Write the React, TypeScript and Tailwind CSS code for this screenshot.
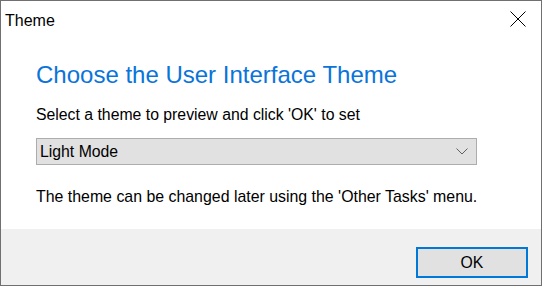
const ThemeDialog = () => {
  return (
    <div className="w-[544px] h-[287px] bg-white overflow-hidden" style={{ fontFamily: '"Liberation Sans", Arial, sans-serif' }}>
      <div className="w-[542px] h-[286px] border border-[#707070] flex flex-col bg-white">
        {/* Title bar */}
        <div className="h-[32px] flex items-start justify-between pl-[4px] pr-[15px]">
          <span className="mt-[10px] text-[16px] leading-[20px] text-black">Theme</span>
          <svg className="mt-[10px]" width="16" height="16" viewBox="0 0 16 16">
            <path d="M0.5 0.5 L15.5 15.5 M15.5 0.5 L0.5 15.5" stroke="#000" strokeWidth="1" fill="none" />
          </svg>
        </div>

        {/* Content */}
        <div className="flex-1 flex flex-col items-start pl-[35px]">
          <h1 className="mt-[28px] text-[24px] leading-[28px] text-[#0a74da] font-normal">
            Choose the User Interface Theme
          </h1>
          <p className="mt-[16.5px] text-[15.8px] leading-[18px] text-black">
            Select a theme to preview and click 'OK' to set
          </p>
          <div className="mt-[14.5px] w-[441px] h-[27px] border border-[#adadad] bg-[#e1e1e1] flex items-center justify-between pl-[3px] pr-[8px]">
            <span className="text-[15.8px] leading-[18px] text-black">Light Mode</span>
            <svg width="12" height="7" viewBox="0 0 12 7">
              <path d="M0.5 0.5 L6 6 L11.5 0.5" stroke="#606060" strokeWidth="1" fill="none" />
            </svg>
          </div>
          <p className="mt-[22.5px] text-[15.9px] leading-[18px] text-black">
            The theme can be changed later using the 'Other Tasks' menu.
          </p>
        </div>

        {/* Footer */}
        <div className="h-[56px] bg-[#f0f0f0] flex justify-end items-start pt-[18px] pr-[13px]">
          <button className="w-[112px] h-[31px] border-2 border-[#0078d7] bg-[#e1e1e1] text-[15.8px] leading-[18px] text-black">
            OK
          </button>
        </div>
      </div>
    </div>
  )
}

export default ThemeDialog
